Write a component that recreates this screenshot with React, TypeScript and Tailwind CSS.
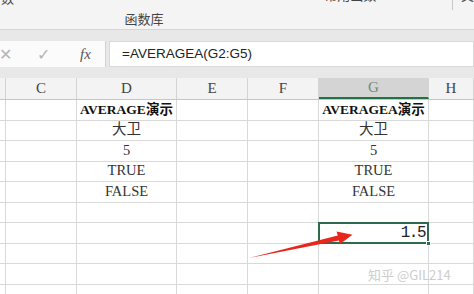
import React from "react";

const cols = ["w-[6px]", "w-[71px]", "w-[100px]", "w-[71px]", "w-[71px]", "w-[110px]", "flex-1"];
const heads = ["", "C", "D", "E", "F", "G", "H"];

type Row = { d?: string; g?: string; bold?: boolean };

const rows: Row[] = [
  { d: "AVERAGE演示", g: "AVERAGEA演示", bold: true },
  { d: "大卫", g: "大卫" },
  { d: "5", g: "5" },
  { d: "TRUE", g: "TRUE" },
  { d: "FALSE", g: "FALSE" },
  {},
  { g: "1.5" },
  {},
  {},
  {},
];

const cellFont = { fontFamily: '"Liberation Serif", "Noto Sans CJK SC", serif' };

function Cell({ w, text, bold }: { w: string; text?: string; bold?: boolean }) {
  return (
    <div
      className={`${w} shrink-0 h-full border-r border-b border-[#d9d9d9] flex items-center justify-center ${bold ? "font-bold text-[13.5px] text-[#111]" : "text-[14.5px] text-[#333]"}`}
      style={cellFont}
    >
      {text}
    </div>
  );
}

export default function App() {
  return (
    <div className="relative w-[474px] h-[294px] overflow-hidden bg-white font-['Noto_Sans',sans-serif]">
      {/* ribbon */}
      <div className="flex h-[30px] bg-[#f4f4f4] border-b border-[#d6d6d6] overflow-hidden text-[13px] text-[#444]" style={{ fontFamily: '"Noto Sans CJK SC", sans-serif' }}>
        <div className="w-[20px] -mt-[12px] pl-[1px]">数</div>
        <div className="w-[250px] flex items-end justify-center pb-[1px]">函数库</div>
        <div className="w-[165px] flex justify-center -mt-[15px]">常用函数</div>
        <div className="w-[20px]" />
        <div className="h-[25px] border-l border-[#c8c8c8] pl-[8px] -mt-[15px]">
          <span className="block">文</span>
        </div>
      </div>

      {/* gray band */}
      <div className="h-[11px] bg-[#e8e8e8]" />

      {/* formula bar */}
      <div className="flex h-[26px] bg-[#e8e8e8]">
        <div className="w-[106px] bg-[#fbfbfb] flex items-center border-r border-[#d0d0d0]">
          <span className="w-[10px] -ml-[1px] text-[#b5b5b5] text-[16px] leading-none">✕</span>
          <span className="ml-[28px] text-[#b5b5b5] text-[16px] leading-none">✓</span>
          <span className="ml-[30px] text-[#555] text-[15px] italic" style={{ fontFamily: '"Liberation Serif", serif' }}>
            fx
          </span>
        </div>
        <div className="flex-1 ml-[3px] bg-white border border-[#d9d9d9] flex items-center pl-[12px] text-[13.5px] text-[#222]" style={{ fontFamily: '"Liberation Sans", sans-serif' }}>
          =AVERAGEA(G2:G5)
        </div>
      </div>

      {/* gray band */}
      <div className="h-[11px] bg-[#e8e8e8]" />

      {/* column headers */}
      <div className="flex h-[22px] bg-[#f3f3f3] border-b border-[#c6c6c6]">
        {heads.map((h, i) => (
          <div
            key={i}
            className={`${cols[i]} shrink-0 h-full border-r border-[#d4d4d4] flex items-center justify-center text-[15px] ${h === "G" ? "bg-[#d4d4d4] text-[#6e8a7b] border-b-2 border-b-[#217346]" : "text-[#444]"}`}
            style={{ fontFamily: '"Liberation Serif", serif' }}
          >
            {h}
          </div>
        ))}
      </div>

      {/* rows */}
      {rows.map((r, ri) => (
        <div key={ri} className="flex h-[20.5px]">
          <Cell w={cols[0]} />
          <Cell w={cols[1]} />
          <Cell w={cols[2]} text={r.d} bold={r.bold} />
          <Cell w={cols[3]} />
          <Cell w={cols[4]} />
          {r.g === "1.5" ? (
            <div className={`${cols[5]} shrink-0 h-full relative border-r border-b border-[#d9d9d9] flex items-center justify-end pr-[3px]`}>
              <span className="text-[16px] tracking-[-1.5px] text-[#222]" style={{ fontFamily: '"Liberation Mono", monospace' }}>
                1.5
              </span>
              <div className="absolute -left-[1px] -top-[1px] -right-[1px] -bottom-[1px] border-2 border-[#2d6a4f]" />
              <div className="absolute -right-[3px] -bottom-[3px] w-[5px] h-[5px] bg-[#2d6a4f] border border-white" />
            </div>
          ) : (
            <Cell w={cols[5]} text={r.g} bold={r.bold} />
          )}
          <Cell w={cols[6]} />
        </div>
      ))}

      {/* red arrow */}
      <svg className="absolute left-0 top-0 pointer-events-none" width="474" height="294" viewBox="0 0 474 294">
        <polygon
          points="249,258 337.8,235.4 336.6,231.4 352.5,234.8 340,244 338.9,240.6"
          fill="#e8261c"
        />
      </svg>

      {/* watermark */}
      <div className="absolute left-[368px] top-[265px] text-[13px] text-[#cdcdcd]" style={{ fontFamily: '"Noto Sans CJK SC", sans-serif' }}>
        知乎 @GIL214
      </div>
    </div>
  );
}
